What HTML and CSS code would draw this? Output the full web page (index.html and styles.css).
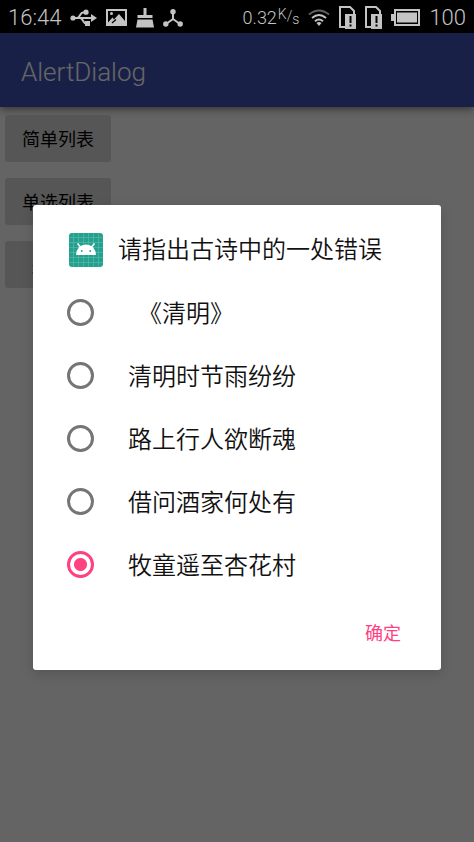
FILE: index.html
```html
<!DOCTYPE html>
<html lang="zh-CN">
<head>
<meta charset="utf-8">
<meta name="viewport" content="width=device-width, initial-scale=1">
<title>AlertDialog</title>
<link rel="stylesheet" href="styles.css">
</head>
<body>
<header class="status">
  <span class="status-time">16:44</span>
  <svg class="icon usb" viewBox="0 0 27 18" width="27" height="18"><circle cx="3" cy="9" r="2.600"/><path d="M21 5l6 4-6 4z"/><path class="line" d="M3 9h19M7 9c3 0 3-5.500 6-5.500h3M10 9c3 0 3 5.500 6 5.500h1"/><circle cx="16" cy="3.200" r="2.600"/><path d="M15 12h5v5h-5z"/></svg>
  <svg class="icon photo" viewBox="0 0 21 17" width="21" height="17"><path class="line" d="M1 1h19v15H1z"/><path d="M2 13.500l4.500-5L8 10.500 13 5l6 7v3H2z"/><path d="M6 14l4-3.500" stroke="#000" stroke-width="1.300"/><circle cx="5.500" cy="4.500" r="1.500"/></svg>
  <svg class="icon broom" viewBox="0 0 18 20" width="18" height="20"><path d="M7.500 0h3v7h-3zM1.500 7h15v3h-15zM1.500 11.500h15l1.500 8H0z"/></svg>
  <svg class="icon nodes" viewBox="0 0 20 18" width="20" height="18"><path class="line" d="M10 3v7L3 15M10 10l7 5"/><circle cx="10" cy="2.700" r="2.700"/><circle cx="2.800" cy="15" r="2.700"/><circle cx="17.200" cy="15" r="2.700"/></svg>
  <span class="status-rate">0.32<span class="unit"><span class="over">K</span>/<span class="under">s</span></span></span>
  <svg class="icon wifi" viewBox="0 0 22 17" width="22" height="17"><path class="line faint" d="M1 5.500Q11-2.500 21 5.500"/><path class="line" d="M4 9Q11 3 18 9M7 12.300Q11 8.800 15 12.300"/><path d="M8.500 14q2.500-2 5 0L11 17z"/></svg>
  <svg class="icon sim" viewBox="0 0 17 23" width="17" height="23"><path class="line" d="M6 21H1V1h10l4 4v3"/><path fill-rule="evenodd" d="M6 8h11v15H6zM10.500 10v7h2v-7zM10.500 18.500v2h2v-2z"/></svg>
  <svg class="icon sim" viewBox="0 0 17 23" width="17" height="23"><path class="line" d="M6 21H1V1h10l4 4v3"/><path fill-rule="evenodd" d="M6 8h11v15H6zM10.500 10v7h2v-7zM10.500 18.500v2h2v-2z"/></svg>
  <svg class="icon battery" viewBox="0 0 29 17" width="29" height="17"><path class="line" d="M4 1h24v15H4z"/><path d="M0 5h3v7H0zM6 3.500h20v10H6z"/></svg>
  <span class="status-level">100</span>
</header>
<div class="screen">
  <header class="appbar"><h1>AlertDialog</h1></header>
  <main class="content">
    <button type="button">简单列表</button>
    <button type="button">单选列表</button>
    <button type="button">多选框</button>
  </main>
  <div class="scrim">
    <form class="dialog" role="dialog" aria-labelledby="dialog-title">
      <div class="dialog-head">
        <svg class="app-icon" viewBox="0 0 34 34" width="34" height="34"><rect width="34" height="34" rx="3" fill="#26a08e"/><path d="M4.500 0v34M9.500 0v34M14.500 0v34M19.500 0v34M24.500 0v34M29.500 0v34M0 4.500h34M0 9.500h34M0 14.500h34M0 19.500h34M0 24.500h34M0 29.500h34" stroke="#5bbdae" stroke-width=".6"/><path d="M7 22a10 10.500 0 0 1 20 0z" fill="#fff"/><path d="M8.500 10.500l3.500 4M25.500 10.500l-3.500 4" stroke="#fff" stroke-width="1.400"/><circle cx="12.800" cy="18" r=".9" fill="#26a08e"/><circle cx="21.200" cy="18" r=".9" fill="#26a08e"/></svg>
        <h2 id="dialog-title">请指出古诗中的一处错误</h2>
      </div>
      <div class="options">
        <label><input type="radio" name="line"><span class="poem-title">《清明》</span></label>
        <label><input type="radio" name="line"><span>清明时节雨纷纷</span></label>
        <label><input type="radio" name="line"><span>路上行人欲断魂</span></label>
        <label><input type="radio" name="line"><span>借问酒家何处有</span></label>
        <label><input type="radio" name="line" checked><span>牧童遥至杏花村</span></label>
      </div>
      <div class="actions"><button type="button">确定</button></div>
    </form>
  </div>
</div>
</body>
</html>
```
FILE: styles.css
```css
* {
  box-sizing: border-box;
}

body {
  margin: 0;
  min-height: 100vh;
  display: flex;
  flex-direction: column;
  background: #000;
  font-family: Roboto, "Noto Sans CJK SC", sans-serif;
}

h1,
h2 {
  margin: 0;
}

button {
  font: inherit;
  border: 0;
}

.status {
  height: 33px;
  display: flex;
  align-items: center;
  gap: 9px;
  padding: 2px 8px 0;
  color: #c4c4c4;
  font-size: 22px;
  font-weight: 300;
}

.icon {
  flex: none;
  fill: currentColor;
}

.line {
  fill: none;
  stroke: currentColor;
  stroke-width: 2;
}

.faint {
  opacity: .5;
}

.status-rate {
  margin-left: auto;
  display: flex;
  align-items: center;
  font-size: 18px;
}

.unit {
  display: flex;
  margin-left: 1px;
  font-size: 14px;
  line-height: 18px;
}

.over {
  padding-bottom: 4px;
  line-height: 14px;
}

.under {
  padding-top: 3px;
}

.screen {
  position: relative;
  flex: 1;
  display: flex;
  flex-direction: column;
  background: #fafafa;
}

.appbar {
  height: 74px;
  display: flex;
  align-items: center;
  padding: 3px 21px 0;
  background: #3f51b5;
  color: #fff;
  box-shadow: 0 2px 8px rgba(0, 0, 0, .5);
}

.appbar h1 {
  font-size: 26px;
  font-weight: 300;
}

.content {
  display: flex;
  flex-direction: column;
  align-items: flex-start;
  gap: 16px;
  padding: 8px 5px;
}

.content button {
  width: 106px;
  height: 47px;
  padding: 0 0 2px;
  border-radius: 3px;
  background: #d6d7d7;
  color: #000;
  font-size: 18px;
}

.scrim {
  position: absolute;
  inset: 0;
  display: flex;
  align-items: center;
  padding: 0 33px;
  background: rgba(0, 0, 0, .6);
}

.dialog {
  flex: 1;
  border-radius: 3px;
  background: #fff;
  color: #111;
  box-shadow: 0 4px 12px rgba(0, 0, 0, .15);
}

.dialog-head {
  display: flex;
  align-items: center;
  gap: 15px;
  padding: 28px 36px 14px;
}

.dialog-head h2 {
  font-size: 24px;
  font-weight: 350;
  line-height: 34px;
}

.options label {
  display: flex;
  align-items: center;
  gap: 34px;
  height: 63px;
  padding: 0 34px;
  font-size: 24px;
  font-weight: 350;
}

.options span {
  padding-bottom: 3px;
}

.options input {
  appearance: none;
  flex: none;
  width: 27px;
  height: 27px;
  margin: 0;
  border: 3px solid #757575;
  border-radius: 50%;
}

.options input:checked {
  border-color: #ff4081;
  background: radial-gradient(circle, #ff4081 6px, transparent 7px);
}

.options .poem-title {
  padding-left: 10px;
}

.actions {
  display: flex;
  justify-content: flex-end;
  padding: 12px 24px;
}

.actions button {
  height: 50px;
  padding: 0 16px 2px;
  background: none;
  color: #ff4081;
  font-size: 18px;
}
```
